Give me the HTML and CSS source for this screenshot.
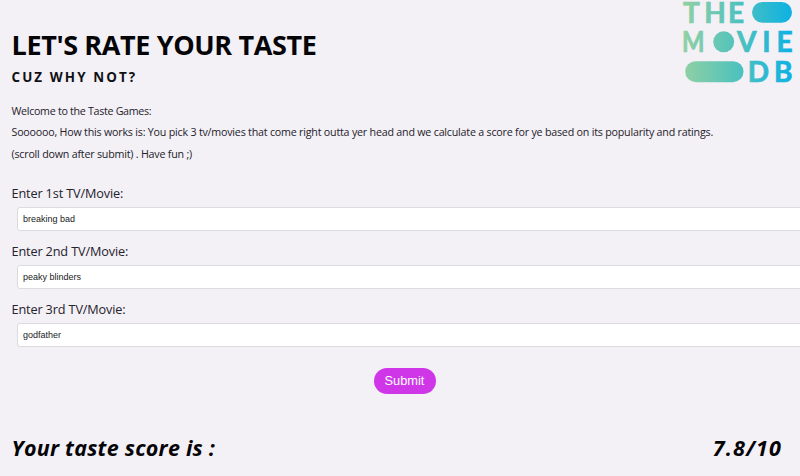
FILE: index.html
```html
<!DOCTYPE html>
<html lang="en">
<head>
<meta charset="utf-8">
<title>Taste Games</title>
<link rel="stylesheet" href="styles.css">
</head>
<body>
<header class="header">
  <div class="heading">
    <h1 class="title">LET'S RATE YOUR TASTE</h1>
    <h2 class="subtitle">CUZ WHY NOT?</h2>
  </div>
  <svg class="logo" viewBox="0 0 112 84" role="img" aria-label="The Movie DB">
    <defs>
      <linearGradient id="brand" gradientUnits="userSpaceOnUse" x1="2" y1="0" x2="111" y2="0">
        <stop offset="0" stop-color="#8fd0a4"/>
        <stop offset=".5" stop-color="#4fc2bd"/>
        <stop offset="1" stop-color="#0cb1e4"/>
      </linearGradient>
    </defs>
    <g fill="url(#brand)">
      <g class="logo-text" stroke="url(#brand)">
        <text y="22.6"><tspan x="1">T</tspan><tspan x="22.2">H</tspan><tspan x="46">E</tspan></text>
        <text x="0" y="52.3" textLength="22.5" lengthAdjust="spacingAndGlyphs">M</text>
        <text y="52.3"><tspan x="55">V</tspan><tspan x="80.3">I</tspan><tspan x="94.4">E</tspan></text>
        <text y="82.2"><tspan x="65.8">D</tspan><tspan x="92">B</tspan></text>
      </g>
      <rect x="70" y="2" width="40" height="20.8" rx="10.4"/>
      <circle cx="41.7" cy="41.8" r="10.5"/>
      <rect x="3.2" y="61.2" width="58.3" height="21" rx="10.5"/>
    </g>
  </svg>
</header>
<section class="intro">
  <p class="line welcome">Welcome to the Taste Games:</p>
  <p class="line rules">Soooooo, How this works is: You pick 3 tv/movies that come right outta yer head and we calculate a score for ye based on its popularity and ratings.</p>
  <p class="line hint">(scroll down after submit) . Have fun ;)</p>
</section>
<form class="form">
  <label class="label" for="first">Enter 1st TV/Movie:</label>
  <input class="field" id="first" type="text" value="breaking bad">
  <label class="label" for="second">Enter 2nd TV/Movie:</label>
  <input class="field" id="second" type="text" value="peaky blinders">
  <label class="label" for="third">Enter 3rd TV/Movie:</label>
  <input class="field" id="third" type="text" value="godfather">
  <button class="submit" type="button">Submit</button>
</form>
<div class="result">
  <span class="result-label">Your taste score is :</span>
  <span class="score">7.8/10</span>
</div>
</body>
</html>
```
FILE: styles.css
```css
* {
  box-sizing: border-box;
}

body {
  margin: 0;
  height: 476px;
  overflow: hidden;
  background: #f3f0f6;
  color: #24222a;
  font-family: "Segoe UI", "Open Sans", "Noto Sans", sans-serif;
}

.header {
  display: flex;
  justify-content: space-between;
  height: 100px;
  padding: 0 6px 0 11.5px;
}

.title {
  margin: 27px 0 0;
  color: #050507;
  font-size: 27px;
  line-height: 36px;
  letter-spacing: -0.37px;
  white-space: nowrap;
}

.subtitle {
  margin: 4px 0 0;
  color: #101014;
  font-size: 13.4px;
  line-height: 20px;
  letter-spacing: 2.1px;
}

.logo {
  width: 112px;
  height: 84px;
  overflow: visible;
}

.logo-text {
  font-family: Lato, sans-serif;
  font-size: 28px;
  font-weight: 700;
  stroke-width: 0.7px;
}

.intro {
  padding: 0.5px 0 0 11.5px;
  font-size: 10.7px;
  line-height: 21.5px;
  letter-spacing: -0.21px;
  white-space: nowrap;
}

.line {
  margin: 0;
}

.welcome {
  letter-spacing: -0.3px;
}

.form {
  display: flex;
  flex-direction: column;
  padding: 18.5px 0 0 11.5px;
}

.label {
  height: 23px;
  font-size: 12.7px;
  line-height: 18px;
  letter-spacing: -0.14px;
}

.field {
  width: 800px;
  height: 24px;
  margin: 0 0 11px 5.5px;
  padding: 0 5px;
  border: 1px solid #dcdae0;
  border-radius: 3px;
  background: #fff;
  color: #222;
  font: 9px "Liberation Sans", Arial, sans-serif;
}

.submit {
  width: 62px;
  height: 26px;
  margin: 10px 0 0 362px;
  padding: 0;
  border: 0;
  border-radius: 13px;
  background: #cf36e8;
  color: #fff;
  font: 12.8px "Liberation Sans", Arial, sans-serif;
}

.result {
  display: flex;
  justify-content: space-between;
  margin-top: 39px;
  padding: 0 18px 0 11.5px;
  color: #050507;
  font-size: 21.5px;
  font-style: italic;
  font-weight: 700;
  line-height: 30px;
}

.result-label {
  letter-spacing: 0.25px;
}

.score {
  letter-spacing: 1.1px;
}
```
